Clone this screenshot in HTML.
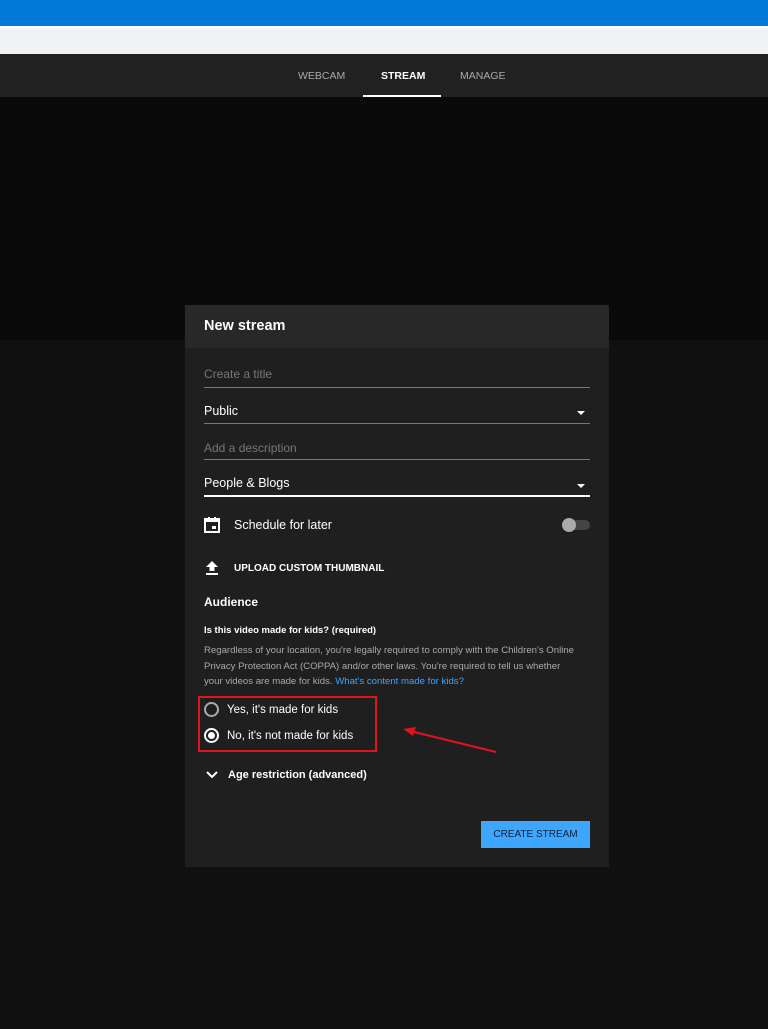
<!DOCTYPE html>
<html><head><style>
body{margin:0;width:768px;height:1029px;background:#101010;font-family:"Liberation Sans",sans-serif;position:relative;overflow:hidden}
.a{position:absolute}
.t{color:#fff;font-size:12.5px}
.line{position:absolute;left:204px;width:386px;height:1px;background:#777}
.car{position:absolute;left:577px;width:0;height:0;border-left:4px solid transparent;border-right:4px solid transparent;border-top:4px solid #fff}
</style></head><body>
<div class="a" style="left:0;top:0;width:768px;height:26px;background:#0078d7"></div>
<div class="a" style="left:0;top:26px;width:768px;height:27px;background:#f1f2f5;border-top:2px solid #fff"></div>
<div class="a" style="left:0;top:54px;width:768px;height:43px;background:#212121"></div>
<div class="a" style="left:0;top:97px;width:768px;height:243px;background:#0a0a0a"></div>
<div class="a" style="left:298px;top:70px;font-size:10.5px;color:#aaa">WEBCAM</div>
<div class="a" style="left:381px;top:70px;font-size:10.5px;color:#fff;font-weight:bold">STREAM</div>
<div class="a" style="left:460px;top:70px;font-size:10.5px;color:#aaa">MANAGE</div>
<div class="a" style="left:363px;top:95px;width:78px;height:2px;background:#fff"></div>

<div class="a" style="left:185px;top:305px;width:424px;height:562px;background:#1f1f1f"></div>
<div class="a" style="left:185px;top:305px;width:424px;height:43px;background:#282828"></div>
<div class="a" style="left:204px;top:318px;font-size:14.5px;color:#fff;font-weight:bold">New stream</div>

<div class="a" style="left:204px;top:367px;font-size:12px;color:#777">Create a title</div>
<div class="line" style="top:387px"></div>
<div class="a t" style="left:204px;top:404px">Public</div><div class="car" style="top:411px"></div>
<div class="line" style="top:423px"></div>
<div class="a" style="left:204px;top:441px;font-size:12px;color:#777">Add a description</div>
<div class="line" style="top:459px"></div>
<div class="a t" style="left:204px;top:476px">People &amp; Blogs</div><div class="car" style="top:484px"></div>
<div class="line" style="top:495px;height:2px;background:#fff"></div>

<svg class="a" style="left:204px;top:516px" width="16" height="17" viewBox="0 0 16 17"><rect x="1" y="3" width="14" height="13" fill="none" stroke="#fff" stroke-width="2"/><rect x="1" y="3" width="14" height="3" fill="#fff"/><rect x="4" y="1" width="2" height="3" fill="#fff"/><rect x="10" y="1" width="2" height="3" fill="#fff"/><rect x="8" y="10" width="4" height="3" fill="#fff"/></svg>
<div class="a t" style="left:234px;top:518px">Schedule for later</div>
<div class="a" style="left:564px;top:520px;width:26px;height:10px;border-radius:5px;background:#444"></div>
<div class="a" style="left:562px;top:518px;width:14px;height:14px;border-radius:7px;background:#aaa"></div>

<svg class="a" style="left:205px;top:560px" width="14" height="15" viewBox="0 0 14 15"><path d="M7 1 L13 7 H9.5 V11 H4.5 V7 H1 Z" fill="#fff"/><rect x="1" y="13" width="12" height="2" fill="#fff"/></svg>
<div class="a" style="left:234px;top:563px;font-size:10px;color:#fff;font-weight:bold">UPLOAD CUSTOM THUMBNAIL</div>
<div class="a" style="left:204px;top:595px;font-size:12px;color:#fff;font-weight:bold">Audience</div>
<div class="a" style="left:204px;top:625px;font-size:9.5px;color:#fff;font-weight:bold">Is this video made for kids? (required)</div>
<div class="a" style="left:204px;top:643px;width:376px;font-size:9.6px;line-height:15.5px;color:#aaa">Regardless of your location, you're legally required to comply with the Children's Online Privacy Protection Act (COPPA) and/or other laws. You're required to tell us whether your videos are made for kids. <span style="color:#3ea6ff">What's content made for kids?</span></div>

<div class="a" style="left:204px;top:702px;width:11px;height:11px;border:2px solid #aaa;border-radius:50%"></div>
<div class="a t" style="left:227px;top:704px;font-size:11.5px">Yes, it's made for kids</div>
<div class="a" style="left:204px;top:728px;width:11px;height:11px;border:2px solid #fff;border-radius:50%"></div>
<div class="a" style="left:208px;top:732px;width:7px;height:7px;background:#fff;border-radius:50%"></div>
<div class="a t" style="left:227px;top:730px;font-size:11.5px">No, it's not made for kids</div>
<div class="a" style="left:198px;top:696px;width:175px;height:52px;border:2px solid #e0141e"></div>
<svg class="a" style="left:400px;top:725px" width="100" height="30"><line x1="96" y1="27" x2="10" y2="6" stroke="#e0141e" stroke-width="2"/><path d="M3 4 L16 2 L13 11 Z" fill="#e0141e"/></svg>

<svg class="a" style="left:206px;top:771px" width="12" height="8"><path d="M1 1 L6 6 L11 1" fill="none" stroke="#fff" stroke-width="2"/></svg>
<div class="a t" style="left:228px;top:769px;font-weight:bold;font-size:11px">Age restriction (advanced)</div>

<div class="a" style="left:481px;top:821px;width:109px;height:27px;background:#3ea6ff;color:#0d2033;font-size:10px;text-align:center;line-height:27px">CREATE STREAM</div>
</body></html>
